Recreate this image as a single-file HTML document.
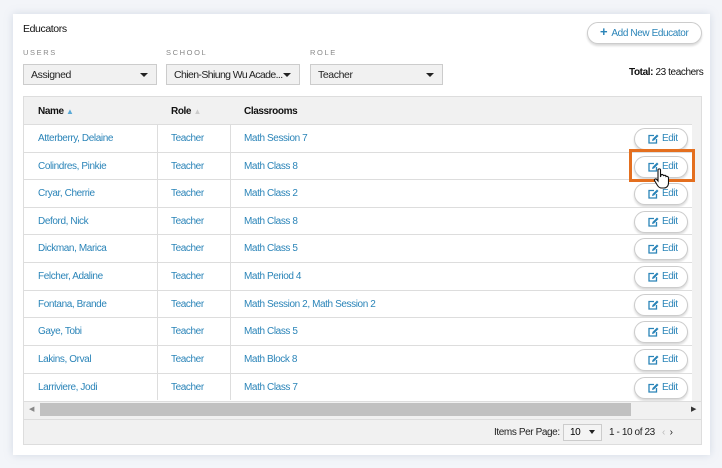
<!DOCTYPE html>
<html><head><style>
*{box-sizing:border-box;margin:0;padding:0}
body{width:722px;height:468px;background:#f3f5f9;font-family:"Liberation Sans",sans-serif;position:relative;overflow:hidden;font-size:10px;letter-spacing:-0.4px;white-space:nowrap}
.card{position:absolute;left:13px;top:14px;width:697px;height:441px;background:#fff;box-shadow:0 0 8px rgba(150,165,190,.35)}
.abs{position:absolute}
.lbl{position:absolute;top:48px;font-size:7.5px;letter-spacing:1.6px;color:#888}
.dd{position:absolute;top:64px;height:21px;background:#f1f1f1;border:1px solid #ccc;font-size:10.5px;color:#222;padding:4px 7px}
.dd:after{content:"";position:absolute;right:8px;top:8px;border:4px solid transparent;border-top:4px solid #222}
.tbl{position:absolute;left:23px;top:96px;width:679px;height:349px;background:#f1f1f1;border:1px solid #ddd}
.row{position:absolute;left:0;width:668px;height:28px;background:#fff;border-top:1px solid #ddd;color:#2a84b8;font-size:10px}
.row span{position:absolute;top:8px}
.c1{left:14px}.c2{left:147px}.c3{left:220px}
.vl{position:absolute;top:0;bottom:0;width:1px;background:#ddd}
.edit{position:absolute;left:610px;top:3px;width:54px;height:22px;border:1px solid #ccc;border-radius:11px;background:#fff;box-shadow:0 2px 2px rgba(0,0,0,.15);color:#2a84b8;font-size:10px;padding:4px 0 0 13px}
.edit svg{position:absolute;left:13px;top:5px}
.edit b{font-weight:normal;margin-left:14px}
</style></head><body>
<div class="card"></div>
<div class="abs" style="left:23px;top:23px;font-size:10.5px;color:#111">Educators</div>
<div class="abs" style="left:587px;top:22px;width:115px;height:22px;border:1px solid #ccc;border-radius:11px;box-shadow:0 2px 2px rgba(0,0,0,.15);color:#2a84b8;font-size:10px;padding:4px 0 0 12px;background:#fff"><b style="font-size:13px;line-height:10px">+</b>&nbsp; Add New Educator</div>
<div class="lbl" style="left:23px">USERS</div>
<div class="lbl" style="left:166px">SCHOOL</div>
<div class="lbl" style="left:310px">ROLE</div>
<div class="dd" style="left:23px;width:134px">Assigned</div>
<div class="dd" style="left:166px;width:134px;letter-spacing:-0.6px">Chien-Shiung Wu Acade...</div>
<div class="dd" style="left:310px;width:133px">Teacher</div>
<div class="abs" style="left:629px;top:67px;font-size:10px;color:#111"><b>Total:</b> 23 teachers</div>
<svg width="0" height="0" style="position:absolute"><defs><symbol id="pe" viewBox="0 0 11 10"><path d="M6 1.5H1V9H8.5V5" fill="none" stroke="#2a84b8" stroke-width="1.3"/><path d="M4 7L4.5 5L9 0.5L10.5 2L6 6.5Z" fill="#2a84b8"/></symbol></defs></svg>
<div class="tbl">
 <div class="abs" style="left:14px;top:9px;font-weight:bold;color:#111">Name <span style="color:#5aa9d6;font-size:8px">▲</span></div>
 <div class="abs" style="left:147px;top:9px;font-weight:bold;color:#111">Role <span style="color:#ccc;font-size:8px">▲</span></div>
 <div class="abs" style="left:220px;top:9px;font-weight:bold;color:#111">Classrooms</div>
 <div class="row" style="top:27px"><span class="c1">Atterberry, Delaine</span><span class="c2">Teacher</span><span class="c3">Math Session 7</span><div class="edit"><svg width="11" height="10"><use href="#pe"/></svg><b>Edit</b></div></div>
 <div class="row" style="top:55px"><span class="c1">Colindres, Pinkie</span><span class="c2">Teacher</span><span class="c3">Math Class 8</span><div class="edit"><svg width="11" height="10"><use href="#pe"/></svg><b>Edit</b></div></div>
 <div class="row" style="top:82px"><span class="c1">Cryar, Cherrie</span><span class="c2">Teacher</span><span class="c3">Math Class 2</span><div class="edit"><svg width="11" height="10"><use href="#pe"/></svg><b>Edit</b></div></div>
 <div class="row" style="top:110px"><span class="c1">Deford, Nick</span><span class="c2">Teacher</span><span class="c3">Math Class 8</span><div class="edit"><svg width="11" height="10"><use href="#pe"/></svg><b>Edit</b></div></div>
 <div class="row" style="top:137px"><span class="c1">Dickman, Marica</span><span class="c2">Teacher</span><span class="c3">Math Class 5</span><div class="edit"><svg width="11" height="10"><use href="#pe"/></svg><b>Edit</b></div></div>
 <div class="row" style="top:165px"><span class="c1">Felcher, Adaline</span><span class="c2">Teacher</span><span class="c3">Math Period 4</span><div class="edit"><svg width="11" height="10"><use href="#pe"/></svg><b>Edit</b></div></div>
 <div class="row" style="top:193px"><span class="c1">Fontana, Brande</span><span class="c2">Teacher</span><span class="c3">Math Session 2, Math Session 2</span><div class="edit"><svg width="11" height="10"><use href="#pe"/></svg><b>Edit</b></div></div>
 <div class="row" style="top:220px"><span class="c1">Gaye, Tobi</span><span class="c2">Teacher</span><span class="c3">Math Class 5</span><div class="edit"><svg width="11" height="10"><use href="#pe"/></svg><b>Edit</b></div></div>
 <div class="row" style="top:248px"><span class="c1">Lakins, Orval</span><span class="c2">Teacher</span><span class="c3">Math Block 8</span><div class="edit"><svg width="11" height="10"><use href="#pe"/></svg><b>Edit</b></div></div>
 <div class="row" style="top:276px"><span class="c1">Larriviere, Jodi</span><span class="c2">Teacher</span><span class="c3">Math Class 7</span><div class="edit"><svg width="11" height="10"><use href="#pe"/></svg><b>Edit</b></div></div>
 <div class="vl" style="left:133px;top:27px;bottom:44px"></div>
 <div class="vl" style="left:206px;top:27px;bottom:44px"></div>
 <div class="abs" style="left:0;top:304px;width:677px;height:18px;background:#f1f1f1;border-top:1px solid #ddd"></div>
 <div class="abs" style="left:16px;top:306px;width:591px;height:13px;background:#c1c1c1"></div>
 <div class="abs" style="left:5px;top:308px;font-size:7px;color:#888">◀</div>
 <div class="abs" style="left:667px;top:308px;font-size:7px;color:#333">▶</div>
 <div class="abs" style="left:0;top:322px;width:677px;height:1px;background:#ddd"></div>
 <div class="abs" style="left:470px;top:330px;font-size:10px;color:#222">Items Per Page:</div>
 <div class="abs" style="left:539px;top:327px;width:39px;height:17px;border:1px solid #ccc;background:#f4f4f4;font-size:10px;padding:2px 6px">10<span style="position:absolute;left:25px;top:5px;border:3.5px solid transparent;border-top:4px solid #222"></span></div>
 <div class="abs" style="left:585px;top:330px;font-size:10px;color:#222">1 - 10 of 23 &nbsp;&nbsp;<span style="color:#bbb">‹</span>&nbsp;&nbsp;›</div>
</div>
<div class="abs" style="left:629px;top:149px;width:66px;height:33px;border:3px solid #e46f1f"></div>
<svg class="abs" style="left:653px;top:168px" width="18" height="22" viewBox="0 0 18 22"><path d="M5 2 C5 0.5 7.5 0.5 7.5 2 V9 L8 7 C9 6 10.5 6.5 10.5 8 C11 7 13 7 13 8.5 C14 8 15.5 8.5 15.5 10 V15 C15.5 18 13.5 20 11 20 H8.5 C6.5 20 5.5 19 4.5 17.5 L1.5 12.5 C1 11.5 2.5 10.3 3.5 11.3 L5 13 Z" fill="#fff" stroke="#111" stroke-width="1.1"/></svg>
</body></html>
